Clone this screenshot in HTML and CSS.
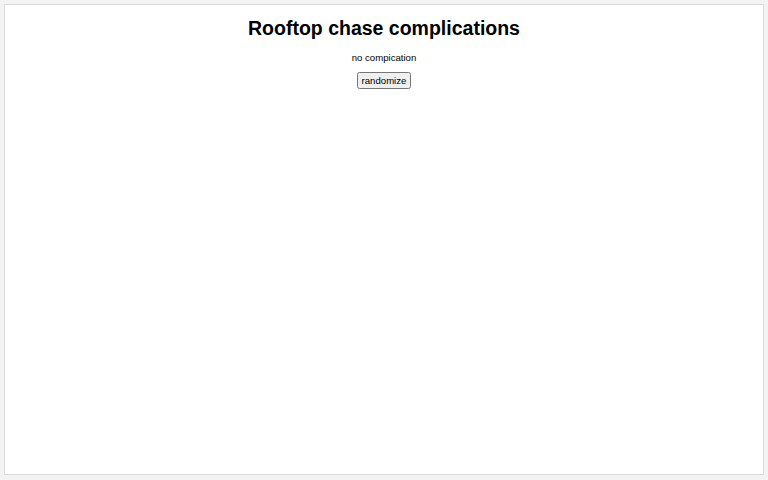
FILE: index.html
```html
<!DOCTYPE html>
<html>
<head>
  <meta charset="UTF-8"/>
  <title>Rooftop chase complications</title>
  <link rel="stylesheet" href="styles.css">
</head>
<body>
  <div class="container">
    <h1>Rooftop chase complications</h1>
    <p id="result">no compication</p>
    <button id="roll" type="button">randomize</button>
  </div>

  <script>
    var complications = [
      "no compication",
      "a loose tile gives way",
      "a gap too wide to jump",
      "a guard dog on the next roof",
      "laundry lines in the way",
      "the roof is slick with rain"
    ];
    document.getElementById("roll").addEventListener("click", function () {
      var i = Math.floor(Math.random() * complications.length);
      document.getElementById("result").innerHTML = complications[i];
    });
  </script>
</body>
</html>
```

FILE: styles.css
```css
html, body {
  height: 100%;
}
body {
  font-family: "Liberation Sans", Arial, sans-serif;
  background: #f3f3f3;
  margin: 0;
  padding: 4px 4px 5px;
  box-sizing: border-box;
}
.container {
  background: #fff;
  border: 1px solid #dcdcdc;
  height: 100%;
  box-sizing: border-box;
  text-align: center;
  padding-top: 12px;
}
.container h1 {
  font-size: 19.5px;
  line-height: 22px;
  margin: 0;
  color: #000;
}
.container p {
  font-size: 9.6px;
  line-height: 12px;
  margin: 13px 0 6px;
}
button {
  font-family: "Liberation Sans", Arial, sans-serif;
  font-size: 9.6px;
  line-height: 11px;
  padding: 1px 3px;
}
```
